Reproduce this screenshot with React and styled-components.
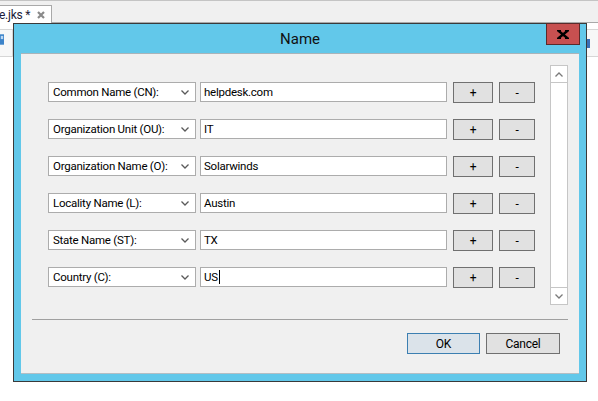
import React from "react";
import styled, { createGlobalStyle } from "styled-components";

const GlobalStyle = createGlobalStyle`
  html, body {
    margin: 0;
    padding: 0;
    background: #fff;
  }
  body {
    font-family: Roboto, "Liberation Sans", Arial, sans-serif;
    font-size: 11.5px;
    letter-spacing: -0.25px;
    color: #000;
  }
  * {
    box-sizing: border-box;
  }
`;

const Desktop = styled.div`
  position: relative;
  width: 598px;
  height: 401px;
  overflow: hidden;
  background: #fff;
`;

// editor behind the dialog
const TabStrip = styled.div`
  display: flex;
  align-items: flex-end;
  height: 23px;
  background: #f0f0f0;
  border-top: 1px solid #c4c4c4;
`;

const Tab = styled.div`
  display: flex;
  align-items: center;
  gap: 7px;
  height: 18px;
  padding: 0 6px 0 0;
  margin-left: -1px;
  background: #fff;
  border: 1px solid #a9a9a9;
  border-left: none;
  border-bottom: none;
  color: #1b1b3a;
  font-size: 12px;
`;

const TabFiller = styled.div`
  flex: 1;
  height: 22px;
  border-bottom: 1px solid #a9a9a9;
`;

const ToolRow = styled.div`
  display: flex;
  justify-content: space-between;
  align-items: stretch;
  height: 28px;
  margin-top: 6px;
`;

const ToolButton = styled.div`
  display: flex;
  align-items: ${(p) => (p.$right ? "center" : "flex-start")};
  justify-content: ${(p) => (p.$right ? "flex-start" : "flex-end")};
  width: ${(p) => (p.$right ? "14px" : "13px")};
  padding: ${(p) => (p.$right ? "0" : "3px 8px 0 0")};
  background: #f7f7f7;
  border: 1px solid #d6d6d6;
  ${(p) => (p.$right ? "border-right: none;" : "border-left: none;")}
`;

// dialog window
const Dialog = styled.div`
  position: absolute;
  left: 13px;
  top: 23px;
  width: 574px;
  height: 359px;
  display: flex;
  flex-direction: column;
  padding: 0 7px 7px;
  background: #62c8ea;
  border: 1px solid #3a3a3a;
`;

const TitleBar = styled.div`
  position: relative;
  display: flex;
  align-items: center;
  justify-content: center;
  height: 29px;
  font-size: 15px;
  letter-spacing: 0;
  color: #111;
`;

const CloseButton = styled.div`
  position: absolute;
  top: -1px;
  right: -1px;
  width: 34px;
  height: 22px;
  display: flex;
  align-items: center;
  justify-content: center;
  background: #c75050;
  border: 1px solid #5a2a2a;
`;

const Client = styled.div`
  flex: 1;
  display: flex;
  flex-direction: column;
  padding: 11px 11px 0 11px;
  background: #f0f0f0;
  border-top: 1px solid #a9b4ba;
  border-bottom: 1px solid #b4bec4;
`;

const Upper = styled.div`
  display: flex;
  height: 240px;
`;

const Fields = styled.div`
  flex: 1;
  display: flex;
  flex-direction: column;
  gap: 16px;
  padding: 17px 0 0 16px;
`;

const Row = styled.div`
  display: flex;
  align-items: flex-start;
  height: 21px;
`;

const Combo = styled.div`
  display: flex;
  align-items: center;
  justify-content: space-between;
  width: 148px;
  height: 20px;
  padding: 0 6px 0 4px;
  background: #fff;
  border: 1px solid #acacac;
  white-space: nowrap;
`;

const TextField = styled.div`
  display: flex;
  align-items: center;
  width: 247px;
  height: 20px;
  margin-left: 4px;
  padding: 0 3px;
  background: #fff;
  border: 1px solid #acacac;
`;

const Caret = styled.span`
  display: inline-block;
  width: 1px;
  height: 14px;
  margin-left: 1px;
  background: #000;
`;

const Button = styled.div`
  display: flex;
  align-items: center;
  justify-content: center;
  width: ${(p) => p.$w}px;
  height: 21px;
  margin-left: ${(p) => p.$gap || 0}px;
  background: ${(p) => (p.$default ? "#dbe3ea" : "#e1e1e1")};
  border: 1px solid ${(p) => (p.$default ? "#3c7fb1" : "#707070")};
  color: #000;
  font-size: 12px;
`;

const Scrollbar = styled.div`
  display: flex;
  flex-direction: column;
  justify-content: space-between;
  width: 18px;
  height: 240px;
  background: #fff;
  border: 1px solid #c6c6c6;
`;

const ScrollArrow = styled.div`
  display: flex;
  align-items: center;
  justify-content: center;
  height: 17px;
  ${(p) => (p.$down ? "border-top" : "border-bottom")}: 1px solid #c6c6c6;
`;

const Separator = styled.div`
  height: 1px;
  margin-top: 14px;
  background: #a0a0a0;
`;

const Footer = styled.div`
  display: flex;
  justify-content: flex-end;
  margin-top: 13px;
  padding-right: 8px;
`;

const Chevron = ({ up, color = "#5a5a5a" }) => (
  <svg width="8" height="5" viewBox="0 0 8 5">
    <path
      d={up ? "M0.5 4.5 L4 1 L7.5 4.5" : "M0.5 0.5 L4 4 L7.5 0.5"}
      fill="none"
      stroke={color}
      strokeWidth="1.3"
    />
  </svg>
);

const TabClose = () => (
  <svg width="8" height="8" viewBox="0 0 8 8">
    <path d="M1 1 L7 7 M7 1 L1 7" stroke="#8a8a8a" strokeWidth="2.2" />
  </svg>
);

const CloseGlyph = () => (
  <svg width="12" height="9" viewBox="0 0 12 9">
    <path d="M1.5 0.8 L10.5 8.2 M10.5 0.8 L1.5 8.2" stroke="#000" strokeWidth="2.4" />
    <path d="M0 0.8 H4 M8 0.8 H12 M0 8.2 H4 M8 8.2 H12" stroke="#000" strokeWidth="1.4" />
  </svg>
);

const fields = [
  ["Common Name (CN):", "helpdesk.com"],
  ["Organization Unit (OU):", "IT"],
  ["Organization Name (O):", "Solarwinds"],
  ["Locality Name (L):", "Austin"],
  ["State Name (ST):", "TX"],
  ["Country (C):", "US"],
];

export default function App() {
  return (
    <>
      <GlobalStyle />
      <Desktop>
        <TabStrip>
          <Tab>
            <span>e.jks *</span>
            <TabClose />
          </Tab>
          <TabFiller />
        </TabStrip>
        <ToolRow>
          <ToolButton>
            <svg width="5" height="13" viewBox="0 0 5 13">
              <rect x="0" y="0" width="5" height="13" fill="#3d83c9" />
              <rect x="1" y="2" width="3" height="4" fill="#bcd8f2" />
            </svg>
          </ToolButton>
          <ToolButton $right>
            <svg width="5" height="9" viewBox="0 0 5 9">
              <rect x="0" y="0" width="2" height="9" fill="#e8a53a" />
              <rect x="2" y="0" width="3" height="9" fill="#3b6fb6" />
            </svg>
          </ToolButton>
        </ToolRow>

        <Dialog>
          <TitleBar>
            Name
            <CloseButton>
              <CloseGlyph />
            </CloseButton>
          </TitleBar>
          <Client>
            <Upper>
              <Fields>
                {fields.map(([label, value], i) => (
                  <Row key={label}>
                    <Combo>
                      <span>{label}</span>
                      <Chevron />
                    </Combo>
                    <TextField>
                      {value}
                      {i === fields.length - 1 && <Caret />}
                    </TextField>
                    <Button $w={40} $gap={6}>+</Button>
                    <Button $w={36} $gap={6}>-</Button>
                  </Row>
                ))}
              </Fields>
              <Scrollbar>
                <ScrollArrow>
                  <Chevron up color="#7a7a7a" />
                </ScrollArrow>
                <ScrollArrow $down>
                  <Chevron color="#7a7a7a" />
                </ScrollArrow>
              </Scrollbar>
            </Upper>
            <Separator />
            <Footer>
              <Button $w={73} $default>OK</Button>
              <Button $w={74} $gap={6}>Cancel</Button>
            </Footer>
          </Client>
        </Dialog>
      </Desktop>
    </>
  );
}
